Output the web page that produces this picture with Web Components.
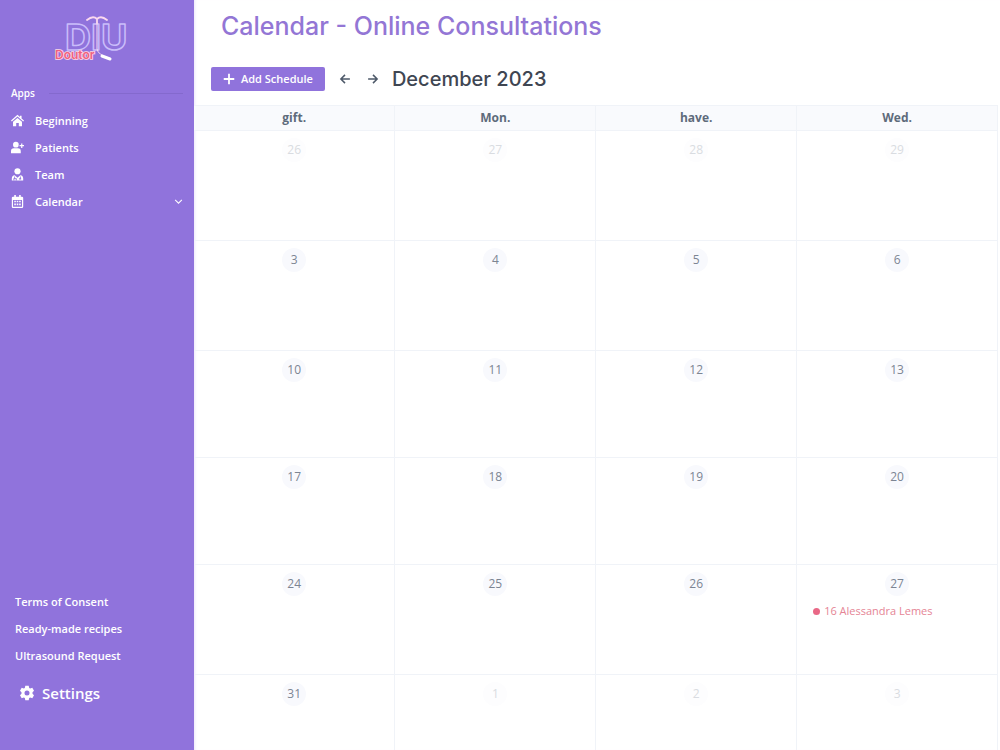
<!DOCTYPE html>
<html lang="en">
<head>
<meta charset="utf-8">
<meta name="viewport" content="width=device-width, initial-scale=1">
<title>Calendar - Online Consultations</title>
<style>
body {
	margin:0;
	background:#fff;
	color:#5e6e82;
	font-family:"Open Sans", "Noto Sans", sans-serif;
	font-size:11px;
}
</style>
</head>
<body>
<diu-app>
	<diu-sidebar slot="sidebar">
		<diu-nav-item icon="home">Beginning</diu-nav-item>
		<diu-nav-item icon="patients">Patients</diu-nav-item>
		<diu-nav-item icon="team">Team</diu-nav-item>
		<diu-nav-item icon="calendar" expandable>Calendar</diu-nav-item>
		<diu-nav-item slot="footer">Terms of Consent</diu-nav-item>
		<diu-nav-item slot="footer">Ready-made recipes</diu-nav-item>
		<diu-nav-item slot="footer">Ultrasound Request</diu-nav-item>
		<diu-nav-item slot="footer" icon="settings" large>Settings</diu-nav-item>
	</diu-sidebar>
	<diu-page-title>Calendar - Online Consultations</diu-page-title>
	<diu-toolbar>December 2023</diu-toolbar>
	<diu-month></diu-month>
</diu-app>

<script>
const icons = {
	home: '<path d="M0 8 8 1l3 2.600V2h2v3.400L16 8l-1 1.200L8 3.200 1 9.200zM2.500 9.500 8 4.800l5.500 4.700V15H9.600v-4H6.400v4H2.500z"/>',
	patients: '<circle cx="6" cy="4.500" r="3.500"/><path d="M0 15v-2.500Q0 9 3.500 9h5Q12 9 12 12.500V15zM12.500 5V3H14v2h2v1.500h-2v2h-1.500v-2h-2V5z"/>',
	team: '<circle cx="8" cy="4" r="3.800"/><path fill-rule="evenodd" d="M1 15.500V13q0-3.500 3.500-4L8 12l3.500-3q3.500.500 3.500 4v2.500zM4 10.500v2H3V15h1.200v-1.500h1.600V15H7v-2.500H5v-2zm7 0v2h-1v1.500h2.500v-1.500H12v-2z"/>',
	calendar: '<path fill-rule="evenodd" d="M4 0h2v2h4V0h2v2h1.500Q15 2 15 3.500v11q0 1.500-1.500 1.500h-11Q1 16 1 14.500v-11Q1 2 2.500 2H4zM2.500 6v8.500h11V6zM4 7h2v2H4zm3 0h2v2H7zm3 0h2v2h-2zm-6 3.500h2v2H4zm3 0h2v2H7zm3 0h2v2h-2z"/>',
	settings: '<path fill-rule="evenodd" d="M6.300.800h3.400l.500 2.100 1 .600 2.100-.700L15 5.700l-1.500 1.600v1.400l1.500 1.600-1.700 2.900-2.100-.700-1 .600-.500 2.100H6.300l-.500-2.100-1-.600-2.100.700L1 10.300l1.500-1.600V7.300L1 5.700l1.700-2.900 2.100.700 1-.600zM8 5.500a2.500 2.500 0 1 0 0 5 2.500 2.500 0 0 0 0-5z"/>',
	plus: '<path d="M6.800 1h2.400v5.800H15v2.400H9.200V15H6.800V9.200H1V6.800h5.800z"/>',
	prev: '<path d="M14.500 8h-12M8 2.500 2.500 8 8 13.500" fill="none" stroke="currentColor" stroke-width="2"/>',
	next: '<path d="M1.500 8h12M8 2.500 13.500 8 8 13.500" fill="none" stroke="currentColor" stroke-width="2"/>',
	down: '<path d="m2 5 6 6 6-6" fill="none" stroke="currentColor" stroke-width="1.800"/>'
};

// base class: every element renders its own template into an open root
class DiuElement extends HTMLElement {
	constructor() {
		super();
		this.attachShadow({mode: 'open'});
	}

	connectedCallback() {
		const template = document.createElement('template');
		template.innerHTML = this.template;
		this.shadowRoot.replaceChildren(template.content.cloneNode(true));
	}
}

class DiuIcon extends DiuElement {
	get template() {
		return `
		<style>
		:host {
			display:inline-block;
			flex:none;
			width:var(--icon-size, 12px);
			height:var(--icon-size, 12px);
		}
		svg {
			display:block;
			width:100%;
			height:100%;
		}
		</style>
		<svg viewBox="0 0 16 16" fill="currentColor" aria-hidden="true">${icons[this.getAttribute('name')]}</svg>`;
	}
}

class DiuLogo extends DiuElement {
	get template() {
		return `
		<style>
		:host {
			display:block;
		}
		svg {
			display:block;
			width:76px;
			height:48px;
		}
		.letters {
			font:700 36px Inter, sans-serif;
			fill:#9073dc;
			stroke:#cabdfa;
			stroke-width:1.500;
			stroke-linejoin:round;
		}
		.name {
			font:600 12px Inter, sans-serif;
			fill:#f0607f;
			stroke:#ffd9e4;
			stroke-width:1.500;
			paint-order:stroke;
		}
		</style>
		<svg viewBox="0 0 76 48" role="img" aria-label="DIU Doutor">
			<text class="letters" x="11" y="35">DIU</text>
			<g fill="none" stroke="#fbd9ef" stroke-width="2" stroke-linecap="round">
				<path d="M33 5q6-5 10-1 4-4 10 1M43 4v4" stroke-width="1.800"/>
				<path d="M43 8v26q1 6 12 9" stroke-width="1"/>
				<path d="m48 41 8 3" stroke="#fff" stroke-width="3"/>
			</g>
			<text class="name" x="1" y="44">Doutor</text>
		</svg>`;
	}
}

class DiuNavItem extends DiuElement {
	get template() {
		const icon = this.getAttribute('icon');
		return `
		<style>
		:host {
			display:block;
		}
		a {
			display:flex;
			align-items:center;
			gap:12px;
			height:27px;
			color:#fff;
			font-weight:600;
			text-decoration:none;
		}
		.icon {
			display:flex;
			width:12px;
			--icon-size:13px;
		}
		.label {
			flex:1;
		}
		.arrow {
			--icon-size:9px;
		}
		:host([large]) a {
			height:48px;
			gap:8px;
			padding-left:4px;
			font-size:15px;
		}
		:host([large]) .icon {
			width:15px;
			--icon-size:16px;
		}
		</style>
		<a href="#">
			${icon ? `<span class="icon"><diu-icon name="${icon}"></diu-icon></span>` : ''}
			<span class="label"><slot></slot></span>
			${this.hasAttribute('expandable') ? '<diu-icon class="arrow" name="down"></diu-icon>' : ''}
		</a>`;
	}
}

class DiuSidebar extends DiuElement {
	get template() {
		return `
		<style>
		:host {
			display:flex;
			flex-direction:column;
			box-sizing:border-box;
			height:100%;
			padding:15px 11px 33px;
			background:#9073dc;
			color:#fff;
		}
		diu-logo {
			align-self:center;
			margin-bottom:23px;
			padding-right:10px;
		}
		.heading {
			display:flex;
			align-items:center;
			gap:14px;
			height:14px;
			margin:0 0 7px;
			font-size:10px;
			font-weight:600;
		}
		.heading::after {
			content:"";
			flex:1;
			height:1px;
			background:#8469cd;
		}
		nav {
			flex:1;
		}
		footer {
			padding-left:4px;
		}
		</style>
		<diu-logo></diu-logo>
		<h2 class="heading">Apps</h2>
		<nav aria-label="Apps"><slot></slot></nav>
		<footer><slot name="footer"></slot></footer>`;
	}
}

class DiuPageTitle extends DiuElement {
	get template() {
		return `
		<style>
		:host {
			display:block;
			padding:9px 27px 9px;
			color:#9376d5;
		}
		h1 {
			margin:0;
			font:500 25px/34px Inter, sans-serif;
		}
		</style>
		<h1><slot></slot></h1>`;
	}
}

class DiuToolbar extends DiuElement {
	get template() {
		return `
		<style>
		:host {
			display:flex;
			align-items:center;
			height:53px;
			padding:0 17px;
		}
		button {
			display:flex;
			align-items:center;
			justify-content:center;
			box-sizing:border-box;
			height:24px;
			border:0;
			padding:0 8px;
			background:none;
			color:#4d5969;
			font:inherit;
			cursor:pointer;
		}
		.add {
			gap:6px;
			margin-right:6px;
			padding:0 12px;
			border-radius:2px;
			background:#9073dc;
			color:#fff;
			font-weight:600;
		}
		h2 {
			margin:0 0 0 5px;
			color:#3f4652;
			font:500 20px/28px Inter, sans-serif;
		}
		</style>
		<button class="add" type="button"><diu-icon name="plus"></diu-icon>Add Schedule</button>
		<button type="button" aria-label="Previous month"><diu-icon name="prev"></diu-icon></button>
		<button type="button" aria-label="Next month"><diu-icon name="next"></diu-icon></button>
		<h2><slot></slot></h2>`;
	}
}

class DiuDay extends DiuElement {
	get template() {
		return `
		<style>
		:host {
			display:block;
			padding:7px 16px 0;
		}
		.number {
			display:block;
			width:24px;
			margin:0 auto;
			border-radius:50%;
			background:#f8f9fd;
			color:#7c8593;
			font-size:12px;
			line-height:24px;
			text-align:center;
		}
		:host([outside]) .number {
			background:#fdfdfe;
			color:#d9dce1;
		}
		::slotted(a) {
			display:flex;
			align-items:center;
			gap:4px;
			margin-top:6px;
			color:#e58495;
			font-size:11px;
			line-height:18px;
			text-decoration:none;
		}
		::slotted(a)::before {
			content:"";
			width:7px;
			height:7px;
			border-radius:50%;
			background:#e96886;
		}
		</style>
		<span class="number">${this.getAttribute('number')}</span>
		<slot></slot>`;
	}
}

class DiuMonth extends DiuElement {
	get weeks() {
		return [
			[26, 27, 28, 29],
			[3, 4, 5, 6],
			[10, 11, 12, 13],
			[17, 18, 19, 20],
			[24, 25, 26, 27],
			[31, 1, 2, 3]
		];
	}

	day(number, week) {
		const outside = (week === 0 && number > 7) || (week === 5 && number < 7);
		const event = week === 4 && number === 27 ? '<a href="#">16 Alessandra Lemes</a>' : '';
		return `<td><diu-day number="${number}" ${outside ? 'outside' : ''}>${event}</diu-day></td>`;
	}

	get template() {
		return `
		<style>
		:host {
			display:block;
			flex:1;
			min-height:0;
			margin-right:2px;
			overflow:hidden;
		}
		table {
			width:100%;
			border-collapse:collapse;
			table-layout:fixed;
		}
		th, td {
			box-sizing:border-box;
			border:1px solid #f0f3f8;
			border-left:0;
			padding:0;
			vertical-align:top;
		}
		th {
			height:25px;
			background:#f9fafd;
			color:#5e6b7b;
			font-size:12px;
			font-weight:700;
			line-height:24px;
		}
		td {
			height:110px;
		}
		.short td {
			height:107px;
		}
		</style>
		<table>
			<thead>
				<tr>${['gift.', 'Mon.', 'have.', 'Wed.'].map(name => `<th scope="col">${name}</th>`).join('')}</tr>
			</thead>
			<tbody>
				${this.weeks.map((days, week) => `
				<tr class="${week === 2 || week === 3 ? 'short' : ''}">${days.map(number => this.day(number, week)).join('')}</tr>`).join('')}
			</tbody>
		</table>`;
	}
}

class DiuApp extends DiuElement {
	get template() {
		return `
		<style>
		:host {
			display:grid;
			grid-template-columns:194px minmax(0, 1fr);
			height:100vh;
		}
		main {
			display:flex;
			flex-direction:column;
			min-height:0;
			box-shadow:inset 3px 0 3px -2px #ece6fb;
		}
		</style>
		<slot name="sidebar"></slot>
		<main><slot></slot></main>`;
	}
}

window.customElements.define('diu-icon', DiuIcon);
window.customElements.define('diu-logo', DiuLogo);
window.customElements.define('diu-nav-item', DiuNavItem);
window.customElements.define('diu-sidebar', DiuSidebar);
window.customElements.define('diu-page-title', DiuPageTitle);
window.customElements.define('diu-toolbar', DiuToolbar);
window.customElements.define('diu-day', DiuDay);
window.customElements.define('diu-month', DiuMonth);
window.customElements.define('diu-app', DiuApp);
</script>
</body>
</html>
